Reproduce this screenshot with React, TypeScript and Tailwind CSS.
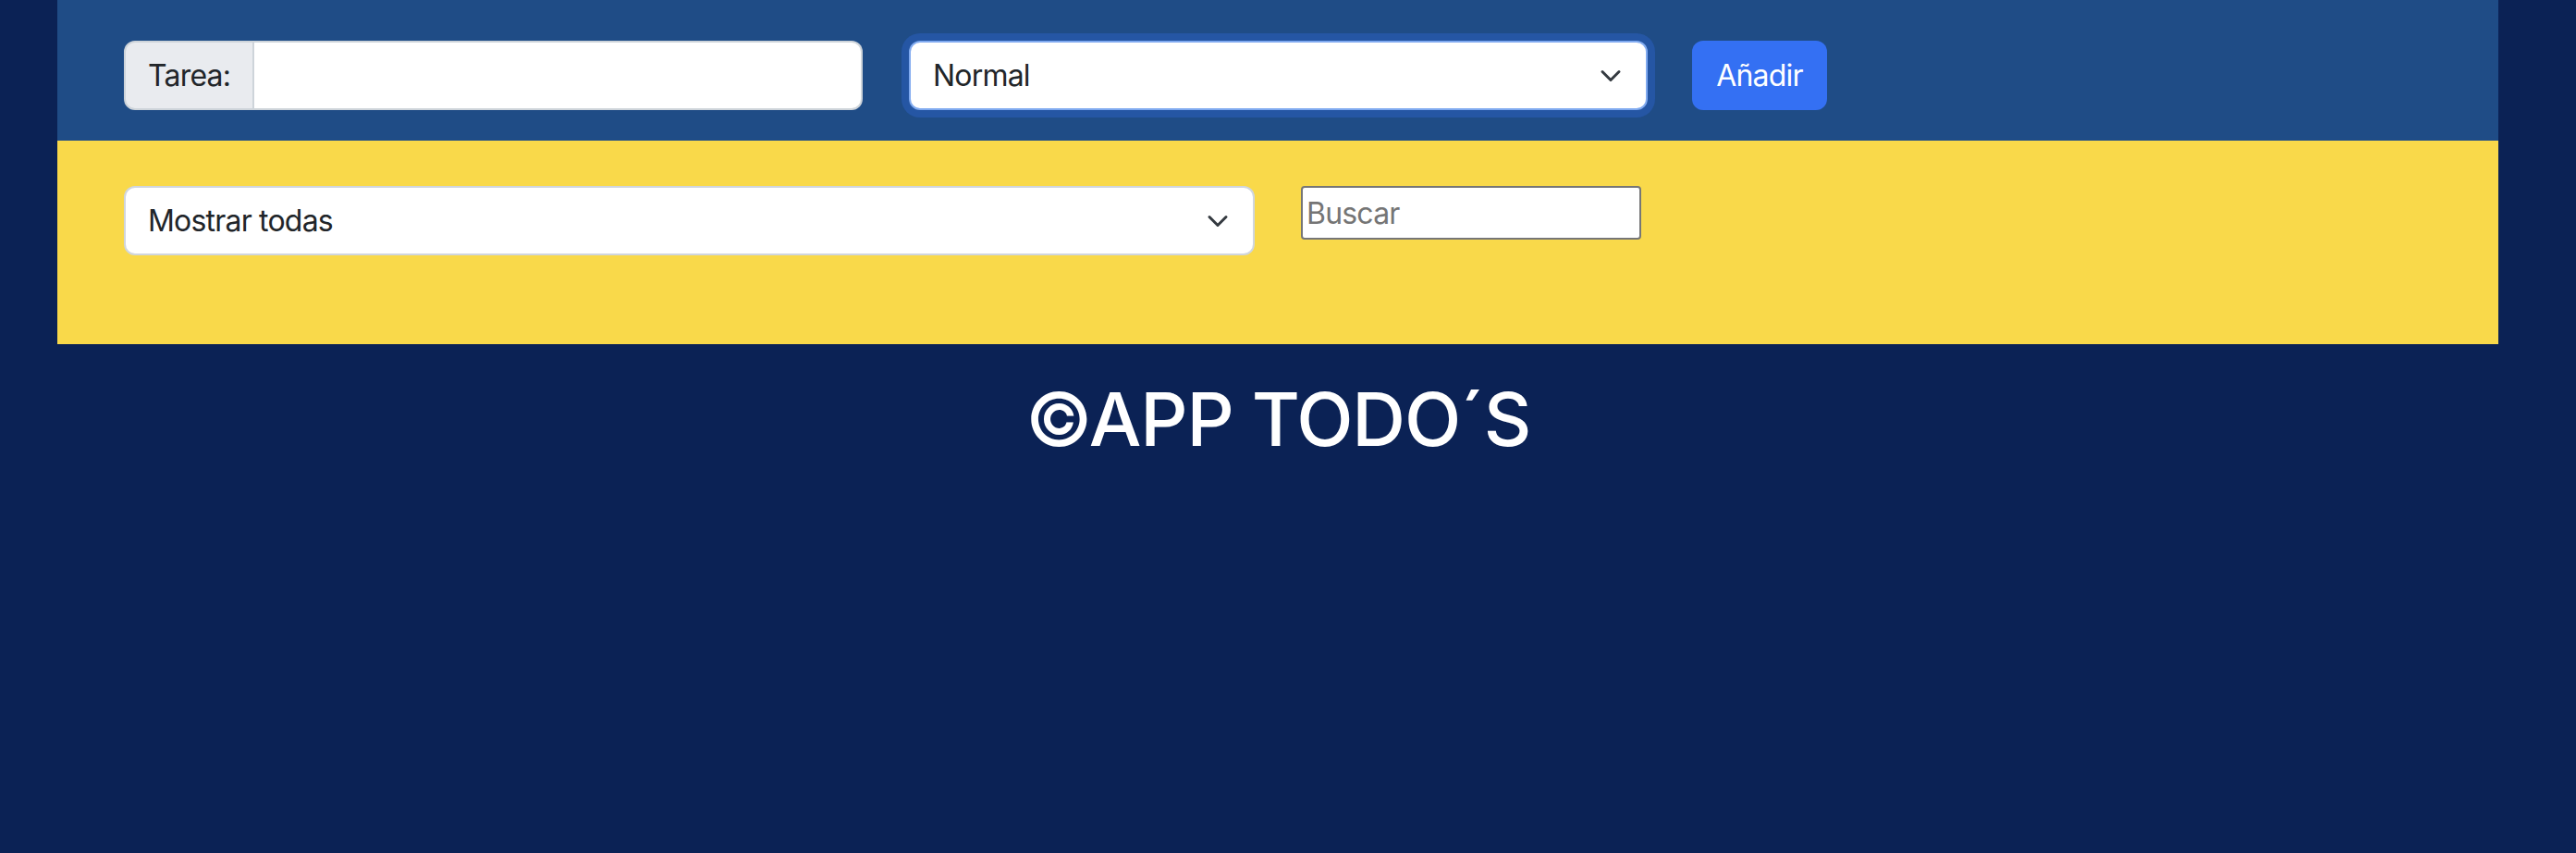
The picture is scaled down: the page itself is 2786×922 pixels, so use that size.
import React from "react";

function Chevron() {
  return (
    <svg
      className="pointer-events-none absolute right-[24px] top-1/2 -translate-y-1/2"
      width="32"
      height="24"
      viewBox="0 0 16 16"
      preserveAspectRatio="xMidYMid meet"
    >
      <path
        fill="none"
        stroke="#343a40"
        strokeLinecap="round"
        strokeLinejoin="round"
        strokeWidth="2"
        d="m2 5 6 6 6-6"
      />
    </svg>
  );
}

export default function App() {
  return (
    <div className="min-h-[922px] w-full bg-[#0b2255] font-[Inter,Roboto,sans-serif] text-[#212529]">
      <div className="ml-[62px] w-[2640px]">
        {/* Blue form section */}
        <div className="flex h-[152px] items-start bg-[#1f4c86] pl-[72px] pt-[44px]">
          <div className="flex h-[75px] w-[799px]">
            <span className="flex h-full items-center rounded-l-[12px] border-2 border-[#ced4da] bg-[#e9ebef] px-[24px] text-[32px] leading-none tracking-[-0.025em]">
              Tarea:
            </span>
            <input
              type="text"
              className="h-full flex-1 rounded-r-[12px] border-2 border-l-0 border-[#ced4da] bg-white px-[24px] text-[32px] outline-none"
            />
          </div>
          <div className="relative ml-[50px] h-[75px] w-[799px] rounded-[12px] shadow-[0_0_0_8px_#2556a4]">
            <select
              defaultValue="Normal"
              className="h-full w-full appearance-none rounded-[12px] border-2 border-[#80aaf0] bg-white pl-[24px] pr-[72px] text-[32px] tracking-[-0.025em] text-[#212529] outline-none"
            >
              <option>Normal</option>
              <option>Urgente</option>
            </select>
            <Chevron />
          </div>
          <button className="ml-[48px] flex h-[75px] w-[146px] items-center justify-center rounded-[12px] bg-[#3470f3] text-[32px] tracking-[-0.025em] text-white">
            Añadir
          </button>
        </div>

        {/* Yellow filter section */}
        <div className="flex h-[220px] items-start bg-[#f9d94a] pl-[72px] pt-[49px]">
          <div className="relative h-[75px] w-[1223px]">
            <select
              defaultValue="Mostrar todas"
              className="h-full w-full appearance-none rounded-[12px] border-2 border-[#d0d6de] bg-white pl-[24px] pr-[72px] text-[32px] tracking-[-0.025em] text-[#212529] outline-none"
            >
              <option>Mostrar todas</option>
              <option>Completadas</option>
              <option>Pendientes</option>
            </select>
            <Chevron />
          </div>
          <input
            type="text"
            placeholder="Buscar"
            className="ml-[50px] h-[58px] w-[368px] rounded-[4px] border-2 border-[#767676] bg-white px-[4px] text-[32px] tracking-[-0.025em] text-[#212529] placeholder:text-[#757575] outline-none"
          />
        </div>

        {/* Footer */}
        <div className="pt-[33px] text-center">
          <h1 className="text-[80px] font-medium leading-[1.2] tracking-[-0.015em] text-white">
            ©APP TODO´S
          </h1>
        </div>
      </div>
    </div>
  );
}
